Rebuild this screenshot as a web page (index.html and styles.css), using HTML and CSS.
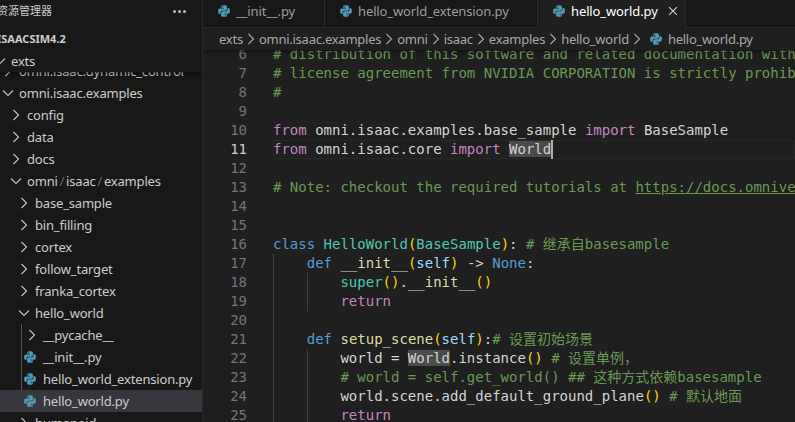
FILE: index.html
```html
<!DOCTYPE html>
<html lang="zh-CN">
<head>
    <meta charset="UTF-8">
    <meta name="viewport" content="width=device-width, initial-scale=1.0">
    <title>hello_world.py - ISAACSIM4.2</title>
    <link rel="stylesheet" href="styles.css">
</head>
<body>

    <svg class="icon-defs">
        <symbol id="py" viewBox="0 0 24 24">
            <path fill-rule="evenodd" d="M9.86 2A2.86 2.86 0 0 0 7 4.86v1.68h4.29c.39 0 .71.57.71.96H4.86A2.86 2.86 0 0 0 2 10.36v3.78A2.86 2.86 0 0 0 4.86 17h1.18v-2.68a2.85 2.85 0 0 1 2.85-2.86h5.25c1.58 0 2.86-1.27 2.86-2.85V4.86A2.86 2.86 0 0 0 14.14 2zm-.72 1.61c.4 0 .72.12.72.71s-.32.89-.72.89c-.39 0-.71-.3-.71-.89s.32-.71.71-.71z"></path>
            <path fill-rule="evenodd" d="M17.96 7v2.68a2.85 2.85 0 0 1-2.85 2.86H9.86A2.85 2.85 0 0 0 7 15.39v3.75A2.86 2.86 0 0 0 9.86 22h4.28A2.86 2.86 0 0 0 17 19.14v-1.68h-4.29c-.39 0-.71-.57-.71-.96h7.14A2.86 2.86 0 0 0 22 13.64V9.86A2.86 2.86 0 0 0 19.14 7zm-3.1 11.4c.39 0 .71.3.71.89s-.32.71-.71.71c-.4 0-.72-.12-.72-.71s.32-.89.72-.89z"></path>
        </symbol>
        <symbol id="right" viewBox="0 0 16 16">
            <path d="M5.5 3l5 5-5 5" fill="none" stroke="currentColor" stroke-width="1.1"></path>
        </symbol>
        <symbol id="down" viewBox="0 0 16 16">
            <path d="M3 5.5l5 5 5-5" fill="none" stroke="currentColor" stroke-width="1.1"></path>
        </symbol>
        <symbol id="x" viewBox="0 0 16 16">
            <path d="M3.5 3.5l9 9M12.5 3.5l-9 9" fill="none" stroke="currentColor" stroke-width="1.2"></path>
        </symbol>
    </svg>

    <div class="workbench">
        <aside class="sidebar">
            <div class="sidebar-title">
                <span class="title-text">资源管理器</span>
                <span class="more"><i></i><i></i><i></i></span>
            </div>
            <div class="section-title">ISAACSIM4.2</div>
            <div class="row sticky-row">
                <svg class="twistie"><use href="#down"></use></svg>
                <span>exts</span>
            </div>
            <div class="tree">
                <div class="row d0"><svg class="twistie"><use href="#right"></use></svg><span>omni.isaac.dynamic_control</span></div>
                <div class="row d0"><svg class="twistie"><use href="#down"></use></svg><span>omni.isaac.examples</span></div>
                <div class="row d1"><svg class="twistie"><use href="#right"></use></svg><span>config</span></div>
                <div class="row d1"><svg class="twistie"><use href="#right"></use></svg><span>data</span></div>
                <div class="row d1"><svg class="twistie"><use href="#right"></use></svg><span>docs</span></div>
                <div class="row d1"><svg class="twistie"><use href="#down"></use></svg><span>omni<b class="sep">/</b>isaac<b class="sep">/</b>examples</span></div>
                <div class="row d2"><svg class="twistie"><use href="#right"></use></svg><span>base_sample</span></div>
                <div class="row d2"><svg class="twistie"><use href="#right"></use></svg><span>bin_filling</span></div>
                <div class="row d2"><svg class="twistie"><use href="#right"></use></svg><span>cortex</span></div>
                <div class="row d2"><svg class="twistie"><use href="#right"></use></svg><span>follow_target</span></div>
                <div class="row d2"><svg class="twistie"><use href="#right"></use></svg><span>franka_cortex</span></div>
                <div class="row d2"><svg class="twistie"><use href="#down"></use></svg><span>hello_world</span></div>
                <div class="children">
                    <div class="row d3"><svg class="twistie"><use href="#right"></use></svg><span>__pycache__</span></div>
                    <div class="row file"><svg class="py-icon"><use href="#py"></use></svg><span>__init__.py</span></div>
                    <div class="row file"><svg class="py-icon"><use href="#py"></use></svg><span>hello_world_extension.py</span></div>
                    <div class="row file selected"><svg class="py-icon"><use href="#py"></use></svg><span>hello_world.py</span></div>
                </div>
                <div class="row d2"><svg class="twistie"><use href="#right"></use></svg><span>humanoid</span></div>
            </div>
        </aside>

        <main class="editor">
            <div class="tabs">
                <div class="tab tab-init"><svg class="py-icon"><use href="#py"></use></svg><span>__init__.py</span></div>
                <div class="tab tab-ext"><svg class="py-icon"><use href="#py"></use></svg><span>hello_world_extension.py</span></div>
                <div class="tab active"><svg class="py-icon"><use href="#py"></use></svg><span>hello_world.py</span><svg class="close"><use href="#x"></use></svg></div>
            </div>
            <div class="breadcrumbs">
                <span>exts</span><svg class="crumb-sep"><use href="#right"></use></svg>
                <span>omni.isaac.examples</span><svg class="crumb-sep"><use href="#right"></use></svg>
                <span>omni</span><svg class="crumb-sep"><use href="#right"></use></svg>
                <span>isaac</span><svg class="crumb-sep"><use href="#right"></use></svg>
                <span>examples</span><svg class="crumb-sep"><use href="#right"></use></svg>
                <span>hello_world</span><svg class="crumb-sep"><use href="#right"></use></svg>
                <svg class="py-icon"><use href="#py"></use></svg><span class="crumb-file">hello_world.py</span>
            </div>
            <div class="code">
                <div class="line"><span class="ln">6</span><span class="src"><span class="c"># distribution of this software and related documentation without</span></span></div>
                <div class="line"><span class="ln">7</span><span class="src"><span class="c"># license agreement from NVIDIA CORPORATION is strictly prohibited.</span></span></div>
                <div class="line"><span class="ln">8</span><span class="src"><span class="c">#</span></span></div>
                <div class="line"><span class="ln">9</span><span class="src"></span></div>
                <div class="line"><span class="ln">10</span><span class="src"><span class="k">from</span> omni.isaac.examples.base_sample <span class="k">import</span> BaseSample</span></div>
                <div class="line current"><span class="ln">11</span><span class="src"><span class="k">from</span> omni.isaac.core <span class="k">import</span> <span class="hl">World</span><span class="cursor"></span></span></div>
                <div class="line"><span class="ln">12</span><span class="src"></span></div>
                <div class="line"><span class="ln">13</span><span class="src"><span class="c"># Note: checkout the required tutorials at <u>https://docs.omniverse.nvidia.com/</u></span></span></div>
                <div class="line"><span class="ln">14</span><span class="src"></span></div>
                <div class="line"><span class="ln">15</span><span class="src"></span></div>
                <div class="line"><span class="ln">16</span><span class="src"><span class="d">class</span> <span class="t">HelloWorld</span><span class="b">(</span><span class="t">BaseSample</span><span class="b">)</span>: <span class="c"># 继承自basesample</span></span></div>
                <div class="line"><span class="ln">17</span><span class="src g1">    <span class="d">def</span> <span class="f">__init__</span><span class="b">(</span><span class="v">self</span><span class="b">)</span> -&gt; <span class="d">None</span>:</span></div>
                <div class="line"><span class="ln">18</span><span class="src g2">        <span class="t">super</span><span class="b">()</span>.<span class="f">__init__</span><span class="b">()</span></span></div>
                <div class="line"><span class="ln">19</span><span class="src g2">        <span class="k">return</span></span></div>
                <div class="line"><span class="ln">20</span><span class="src g1"></span></div>
                <div class="line"><span class="ln">21</span><span class="src g1">    <span class="d">def</span> <span class="f">setup_scene</span><span class="b">(</span><span class="v">self</span><span class="b">)</span>:<span class="c"># 设置初始场景</span></span></div>
                <div class="line"><span class="ln">22</span><span class="src g2">        world = <span class="hl">World</span>.instance<span class="b">()</span> <span class="c"># 设置单例，</span></span></div>
                <div class="line"><span class="ln">23</span><span class="src g2">        <span class="c"># world = self.get_world() ## 这种方式依赖basesample</span></span></div>
                <div class="line"><span class="ln">24</span><span class="src g2">        world.scene.add_default_ground_plane<span class="b">()</span> <span class="c"># 默认地面</span></span></div>
                <div class="line"><span class="ln">25</span><span class="src g2">        <span class="k">return</span></span></div>
            </div>
        </main>
    </div>

</body>
</html>
```

FILE: styles.css
```css
html, body {
    margin: 0;
    padding: 0;
    width: 795px;
    height: 422px;
    overflow: hidden;
    background-color: #1f1f1f;
}

.icon-defs {
    display: none;
}

.workbench {
    display: flex;
    height: 422px;
    overflow: hidden;
    font-family: "Noto Sans", "Noto Sans CJK SC", sans-serif;
    font-size: 13px;
    color: #cccccc;
}

/* Explorer */
.sidebar {
    flex: 0 0 202px;
    width: 202px;
    overflow: hidden;
    background-color: #181818;
    border-right: 1px solid #2b2b2b;
}

.sidebar-title {
    display: flex;
    align-items: center;
    justify-content: space-between;
    height: 28px;
    padding: 0 16px 8px 0;
    box-sizing: border-box;
    font-size: 11px;
}

.title-text {
    margin-left: -3px;
}

.more {
    display: flex;
    gap: 2px;
    margin-top: 3px;
}

.more i {
    width: 3px;
    height: 3px;
    border-radius: 50%;
    background-color: #bbbbbb;
}

.section-title {
    height: 22px;
    line-height: 22px;
    margin-left: -3px;
    font-size: 11px;
    font-weight: 700;
}

.row {
    display: flex;
    align-items: center;
    height: 22px;
    white-space: nowrap;
    letter-spacing: -0.18px;
}

.sticky-row {
    position: relative;
    z-index: 2;
    margin-left: -8px;
    background-color: #181818;
    box-shadow: 0 2px 4px rgba(0, 0, 0, 0.45);
}

.twistie {
    flex: 0 0 16px;
    width: 16px;
    height: 16px;
    margin-right: 3px;
    color: #c5c5c5;
}

.tree {
    margin-top: -12px;
}

.d1 { padding-left: 8px; }
.d2 { padding-left: 16px; }
.d3 { padding-left: 24px; }

.file {
    padding-left: 23px;
}

.file .py-icon {
    margin-right: 6px;
}

.selected {
    background-color: #37373d;
}

.children {
    background: linear-gradient(#58585c, #58585c) 21px 0 / 1px 100% no-repeat;
}

.sep {
    font-weight: 300;
    margin: 0 2px;
    color: #8c8c8c;
}

.py-icon {
    flex: 0 0 14px;
    width: 14px;
    height: 14px;
    fill: #519aba;
}

/* Editor */
.editor {
    flex: 1;
    min-width: 0;
    overflow: hidden;
}

.tabs {
    display: flex;
    height: 27px;
    background-color: #181818;
    border-bottom: 1px solid #2b2b2b;
}

.tab {
    display: flex;
    align-items: center;
    gap: 5px;
    height: 27px;
    padding: 0 0 6px 14px;
    box-sizing: border-box;
    border-right: 1px solid #2b2b2b;
    color: #9d9d9d;
    letter-spacing: -0.12px;
}

.tab-init { width: 122px; }
.tab-ext { width: 213px; }

.tab.active {
    width: 148px;
    height: 28px;
    padding-bottom: 7px;
    background-color: #1f1f1f;
    color: #ffffff;
}

.close {
    flex: 0 0 14px;
    width: 14px;
    height: 14px;
    margin-left: 3px;
    color: #d8d8d8;
}

.breadcrumbs {
    position: relative;
    z-index: 2;
    display: flex;
    align-items: center;
    height: 22px;
    padding-left: 16px;
    background-color: #1f1f1f;
    color: #a9a9a9;
    box-shadow: 0 2px 4px rgba(0, 0, 0, 0.4);
    white-space: nowrap;
    letter-spacing: -0.25px;
}

.crumb-sep {
    flex: 0 0 16px;
    width: 16px;
    height: 16px;
    color: #a9a9a9;
}

.crumb-sep + .py-icon {
    margin-left: 4px;
}

.crumb-file {
    margin-left: 5px;
}

.code {
    margin-top: -5px;
    font-family: "DejaVu Sans Mono", "Noto Sans CJK SC", monospace;
    font-size: 14px;
    color: #d4d4d4;
}

.line {
    display: flex;
    height: 19px;
    line-height: 19px;
    white-space: pre;
}

.ln {
    flex: 0 0 44px;
    width: 44px;
    margin-right: 26px;
    text-align: right;
    color: #6e7681;
}

.src {
    flex: 1;
    min-width: 0;
    overflow: hidden;
}

/* indent guides */
.g1 {
    background: linear-gradient(#404040, #404040) 0 0 / 1px 100% no-repeat;
}

.g2 {
    background:
        linear-gradient(#404040, #404040) 0 0 / 1px 100% no-repeat,
        linear-gradient(#404040, #404040) 34px 0 / 1px 100% no-repeat;
}

.current .ln {
    color: #cccccc;
}

.current .src {
    box-shadow: inset 0 0 0 1px #282828;
}

.hl {
    background-color: #4b4b4b;
}

.cursor {
    display: inline-block;
    width: 2px;
    height: 19px;
    vertical-align: top;
    background-color: #aeafad;
}

.c { color: #6a9955; }
.k { color: #c586c0; }
.d { color: #569cd6; }
.t { color: #4ec9b0; }
.f { color: #dcdcaa; }
.v { color: #9cdcfe; }
.b { color: #ffd700; }
```
